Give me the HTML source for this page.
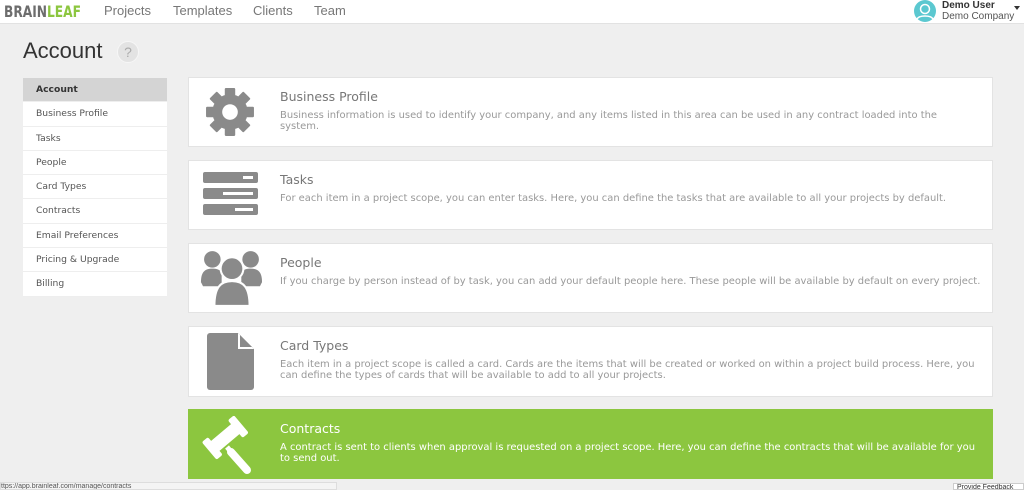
<!DOCTYPE html>
<html><head><style>
*{margin:0;padding:0;box-sizing:border-box}
body{width:1024px;height:490px;overflow:hidden;background:#efefef;font-family:"Liberation Sans",sans-serif;position:relative}
.top{position:absolute;left:0;top:0;width:1024px;height:24px;background:#fff;border-bottom:1px solid #e2e2e2}
.logo{position:absolute;left:4px;top:2px;font-weight:bold;font-size:16px;font-family:"DejaVu Sans Condensed","Liberation Sans",sans-serif;transform:scaleX(0.85);transform-origin:left}
.nav{position:absolute;top:3px;font-size:13px;color:#777}
h1{position:absolute;left:23px;top:38px;font-size:22px;font-weight:normal;color:#333}
.q{position:absolute;left:117px;top:41px;width:22px;height:22px;border-radius:50%;background:#e3e3e3;border:1px solid #f6f6f6;color:#aaa;font-size:14px;text-align:center;line-height:21px}
.side{position:absolute;left:23px;top:78px;width:144px;background:#fff;font-family:"DejaVu Sans",sans-serif}
.side div{height:24.3px;line-height:24px;padding-left:13px;font-size:9.2px;color:#555;border-bottom:1px solid #eee}
.side div.a{background:#d4d4d4;font-weight:bold;color:#333}
.card{position:absolute;left:188px;width:805px;background:#fff;border:1px solid #e3e3e3;font-family:"DejaVu Sans",sans-serif}
.card h2{position:absolute;left:91px;top:11px;font-size:12.5px;font-weight:normal;color:#777}
.card p{position:absolute;left:91px;top:32px;right:6px;font-size:9.95px;line-height:11px;color:#999}
.card svg{position:absolute}
.g{background:#8cc63f;border-color:#8cc63f}
.g h2,.g p{color:#fff}
</style></head><body>
<div class="top">
<div class="logo"><span style="color:#6d6d6d">BRAIN</span><span style="color:#8cc63f">LEAF</span></div>
<div class="nav" style="left:104px">Projects</div>
<div class="nav" style="left:173px">Templates</div>
<div class="nav" style="left:253px">Clients</div>
<div class="nav" style="left:314px">Team</div>
<svg style="position:absolute;left:913px;top:0" width="24" height="23"><circle cx="12" cy="11" r="11" fill="#5bc8d0"/><circle cx="12" cy="9" r="4.5" fill="none" stroke="#fff" stroke-width="1.5"/><path d="M4 19c2-4 14-4 16 0" fill="none" stroke="#fff" stroke-width="1.5"/></svg>
<div style="position:absolute;left:942px;top:0;font-size:10px;font-weight:bold;color:#333">Demo User</div>
<div style="position:absolute;left:942px;top:11px;font-size:10px;color:#555">Demo Company</div>
<div style="position:absolute;left:1014px;top:6px;border:3px solid transparent;border-top:4px solid #333"></div>
</div>
<h1>Account</h1><div class="q">?</div>
<div class="side">
<div class="a">Account</div><div>Business Profile</div><div>Tasks</div><div>People</div><div>Card Types</div><div>Contracts</div><div>Email Preferences</div><div>Pricing &amp; Upgrade</div><div>Billing</div>
</div>
<div class="card" style="top:77px;height:70px">
<svg style="left:16px;top:9px" width="50" height="50" viewBox="0 0 48 48"><g fill="#8a8a8a"><circle cx="24" cy="24" r="17"/><g><rect x="19" y="1" width="10" height="46" rx="1"/><rect x="19" y="1" width="10" height="46" rx="1" transform="rotate(45 24 24)"/><rect x="19" y="1" width="10" height="46" rx="1" transform="rotate(90 24 24)"/><rect x="19" y="1" width="10" height="46" rx="1" transform="rotate(135 24 24)"/></g></g><circle cx="24" cy="24" r="7.5" fill="#fff"/></svg>
<h2>Business Profile</h2><p style="right:40px">Business information is used to identify your company, and any items listed in this area can be used in any contract loaded into the system.</p></div>
<div class="card" style="top:160px;height:70px">
<svg style="left:14px;top:11px" width="56" height="45"><g fill="#8a8a8a"><rect x="0" y="0" width="55" height="11" rx="2"/><rect x="0" y="16" width="55" height="11" rx="2"/><rect x="0" y="32" width="55" height="11" rx="2"/></g><g fill="#fff"><rect x="40" y="4" width="10" height="3"/><rect x="20" y="20" width="30" height="3"/><rect x="32" y="36" width="18" height="3"/></g></svg>
<h2>Tasks</h2><p>For each item in a project scope, you can enter tasks. Here, you can define the tasks that are available to all your projects by default.</p></div>
<div class="card" style="top:243px;height:70px">
<svg style="left:11px;top:5px" width="64" height="60" viewBox="0 0 60 58"><g fill="#8a8a8a"><circle cx="11" cy="10" r="8"/><circle cx="48" cy="10" r="8"/><path d="M0 32c0-10 4-13 11-13s9 3 9 5v12H2z"/><path d="M59 32c0-10-4-13-11-13s-9 3-9 5v12h18z"/></g><g fill="#8a8a8a" stroke="#fff" stroke-width="2"><circle cx="30" cy="19" r="11"/><path d="M13 55c0-18 6-24 17-24s17 6 17 24z"/></g></svg>
<h2>People</h2><p style="right:0;white-space:nowrap">If you charge by person instead of by task, you can add your default people here. These people will be available by default on every project.</p></div>
<div class="card" style="top:326px;height:71px">
<svg style="left:18px;top:6px" width="48" height="57"><path d="M3 0h28l16 16v38a3 3 0 0 1-3 3H3a3 3 0 0 1-3-3V3a3 3 0 0 1 3-3z" fill="#8a8a8a"/><path d="M31 0v16h16" fill="#fff"/><path d="M33 2v12h12z" fill="#8a8a8a"/></svg>
<h2>Card Types</h2><p>Each item in a project scope is called a card. Cards are the items that will be created or worked on within a project build process. Here, you can define the types of cards that will be available to add to all your projects.</p></div>
<div class="card g" style="top:409px;height:70px">
<svg style="left:12px;top:6px" width="60" height="60" viewBox="0 0 60 60"><g fill="#fff" transform="rotate(-40 26 22)"><rect x="10" y="14" width="30" height="13" rx="2"/><rect x="4" y="9" width="8" height="23" rx="2"/><rect x="38" y="9" width="8" height="23" rx="2"/></g><path d="M30 36l16 18" stroke="#fff" stroke-width="8" stroke-linecap="round"/><path d="M26 31l5 6" stroke="#fff" stroke-width="5"/></svg>
<h2>Contracts</h2><p>A contract is sent to clients when approval is requested on a project scope. Here, you can define the contracts that will be available for you to send out.</p></div>
<div style="position:absolute;left:0;top:482px;width:337px;height:8px;background:#f4f4f4;border:1px solid #ddd;font-size:7px;color:#555;line-height:8px;overflow:hidden">ttps://app.brainleaf.com/manage/contracts</div>
<div style="position:absolute;left:953px;top:483px;width:71px;height:7px;background:#fff;border:1px solid #ccc;font-size:7px;color:#333;line-height:8px;padding-left:3px;overflow:hidden">Provide Feedback</div>
</body></html>
